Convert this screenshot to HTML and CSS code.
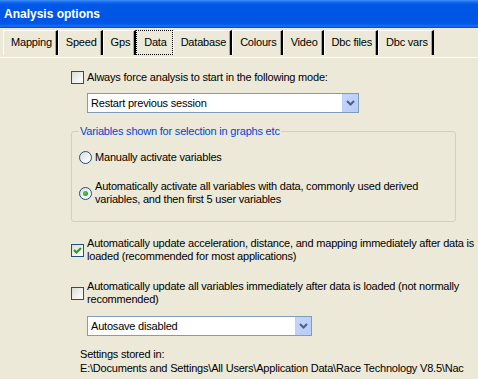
FILE: index.html
```html
<!DOCTYPE html>
<html>
<head>
<meta charset="utf-8">
<link rel="stylesheet" href="styles.css">
</head>
<body>
<div class="window">
  <div class="titlebar">Analysis options</div>
  <div class="tabs">
    <div class="tab">Mapping</div>
    <div class="tab">Speed</div>
    <div class="tab">Gps</div>
    <div class="tab active">Data</div>
    <div class="tab">Database</div>
    <div class="tab">Colours</div>
    <div class="tab">Video</div>
    <div class="tab">Dbc files</div>
    <div class="tab">Dbc vars</div>
  </div>
  <div class="page">
    <div class="row row-first">
      <span class="check"></span>
      <span class="label">Always force analysis to start in the following mode:</span>
    </div>
    <div class="select select-wide">
      <span class="select-text">Restart previous session</span>
      <span class="drop"><svg width="9" height="6" viewBox="0 0 9 6"><path d="M1 1 L4.5 4.5 L8 1" fill="none" stroke="#4d6185" stroke-width="2"/></svg></span>
    </div>
    <fieldset class="group">
      <legend>Variables shown for selection in graphs etc</legend>
      <div class="row radio-row first-radio">
        <span class="radio"></span>
        <span class="label">Manually activate variables</span>
      </div>
      <div class="row radio-row second-radio">
        <span class="radio on"><span class="dot"></span></span>
        <span class="label">Automatically activate all variables with data, commonly used derived<br>variables, and then first 5 user variables</span>
      </div>
    </fieldset>
    <div class="row row-accel">
      <span class="check checked"><svg width="11" height="11" viewBox="0 0 11 11"><path d="M2 5 L4.5 7.5 L9 3" fill="none" stroke="#21a121" stroke-width="2.2"/></svg></span>
      <span class="label">Automatically update acceleration, distance, and mapping immediately after data is<br>loaded (recommended for most applications)</span>
    </div>
    <div class="row row-all">
      <span class="check"></span>
      <span class="label">Automatically update all variables immediately after data is loaded (not normally<br>recommended)</span>
    </div>
    <div class="select select-narrow">
      <span class="select-text">Autosave disabled</span>
      <span class="drop"><svg width="9" height="6" viewBox="0 0 9 6"><path d="M1 1 L4.5 4.5 L8 1" fill="none" stroke="#4d6185" stroke-width="2"/></svg></span>
    </div>
    <div class="settings">
      <div>Settings stored in:</div>
      <div class="path">E:\Documents and Settings\All Users\Application Data\Race Technology V8.5\Nac</div>
    </div>
  </div>
</div>
</body>
</html>
```
FILE: styles.css
```css
html, body {
  margin: 0;
  padding: 0;
}
body {
  width: 478px;
  height: 379px;
  overflow: hidden;
  background: #ece9d8;
  font-family: "Liberation Sans", Arial, sans-serif;
  font-size: 11px;
  letter-spacing: -0.2px;
  color: #000;
}
.window {
  width: 478px;
  height: 379px;
  overflow: hidden;
}
.titlebar {
  height: 28px;
  box-sizing: border-box;
  padding: 6px 0 0 4px;
  font-weight: bold;
  font-size: 12px;
  letter-spacing: 0;
  line-height: 16px;
  color: #fff;
  background: linear-gradient(to bottom, #3d8ff5 0px, #1a6ef2 2px, #0058e6 4px, #0055e3 20px, #0058ea 24px, #1d70f5 26px, #0048c8 28px);
}
.tabs {
  display: flex;
  height: 30px;
  box-sizing: border-box;
  padding: 2px 0 0 3px;
  border-bottom: 1px solid #fff;
}
.tab {
  height: 25px;
  box-sizing: border-box;
  padding: 0 4px 0 7px;
  line-height: 22px;
  border-left: 1px solid #fff;
  border-top: 1px solid #fff;
  border-right: 2px solid #000;
  box-shadow: inset -1px 0 0 #aca899;
}
.tab.active {
  outline: 1px dotted #000;
  outline-offset: -1px;
  border-right-color: #ece9d8;
  box-shadow: none;
}
.page {
  padding-left: 71px;
  display: flex;
  flex-direction: column;
  align-items: flex-start;
}
.row {
  display: flex;
  align-items: center;
  gap: 3px;
  line-height: 13px;
  white-space: nowrap;
}
.row-first { margin-top: 13px; }
.check {
  width: 13px;
  height: 13px;
  box-sizing: border-box;
  border: 1px solid #1c5180;
  background: linear-gradient(135deg, #dcdcd7 0%, #f2f2ef 60%, #fff 100%);
  flex: none;
  display: flex;
  align-items: center;
  justify-content: center;
}
.select {
  margin-left: 16px;
  height: 20px;
  box-sizing: border-box;
  border: 1px solid #7f9db9;
  background: #fff;
  display: flex;
  align-items: center;
  justify-content: space-between;
  padding-left: 3px;
}
.select-wide { width: 272px; margin-top: 9px; }
.select-narrow { width: 225px; margin-top: 10px; }
.select-text { line-height: 13px; }
.drop {
  width: 16px;
  height: 18px;
  box-sizing: border-box;
  border: 1px solid #bcd0f8;
  background: linear-gradient(135deg, #c6d7fc 0%, #b6cbf7 100%);
  display: flex;
  align-items: center;
  justify-content: center;
}
.group {
  margin: 12px 0 0 0;
  width: 385px;
  box-sizing: border-box;
  border: 1px solid #d0d0bf;
  border-radius: 3px;
  padding: 0 7px 15px 7px;
}
.group legend {
  color: #0046d5;
  padding: 0 1px;
  line-height: 13px;
}
.radio-row { gap: 3px; }
.first-radio { margin-top: 13px; }
.second-radio { margin-top: 16px; }
.radio {
  width: 13px;
  height: 13px;
  box-sizing: border-box;
  border: 1px solid #1c5180;
  border-radius: 50%;
  background: linear-gradient(135deg, #dcdcd7 0%, #f4f4f1 60%, #fff 100%);
  flex: none;
  display: flex;
  align-items: center;
  justify-content: center;
}
.dot {
  width: 5px;
  height: 5px;
  border-radius: 50%;
  background: radial-gradient(circle at 40% 40%, #55d355 0%, #21a121 70%);
}
.row-accel { margin-top: 15px; }
.row-all { margin-top: 17px; }
.settings {
  margin-top: 11px;
  margin-left: 9px;
  line-height: 14px;
  white-space: nowrap;
}
.path {
  width: 398px;
  overflow: hidden;
}
```
